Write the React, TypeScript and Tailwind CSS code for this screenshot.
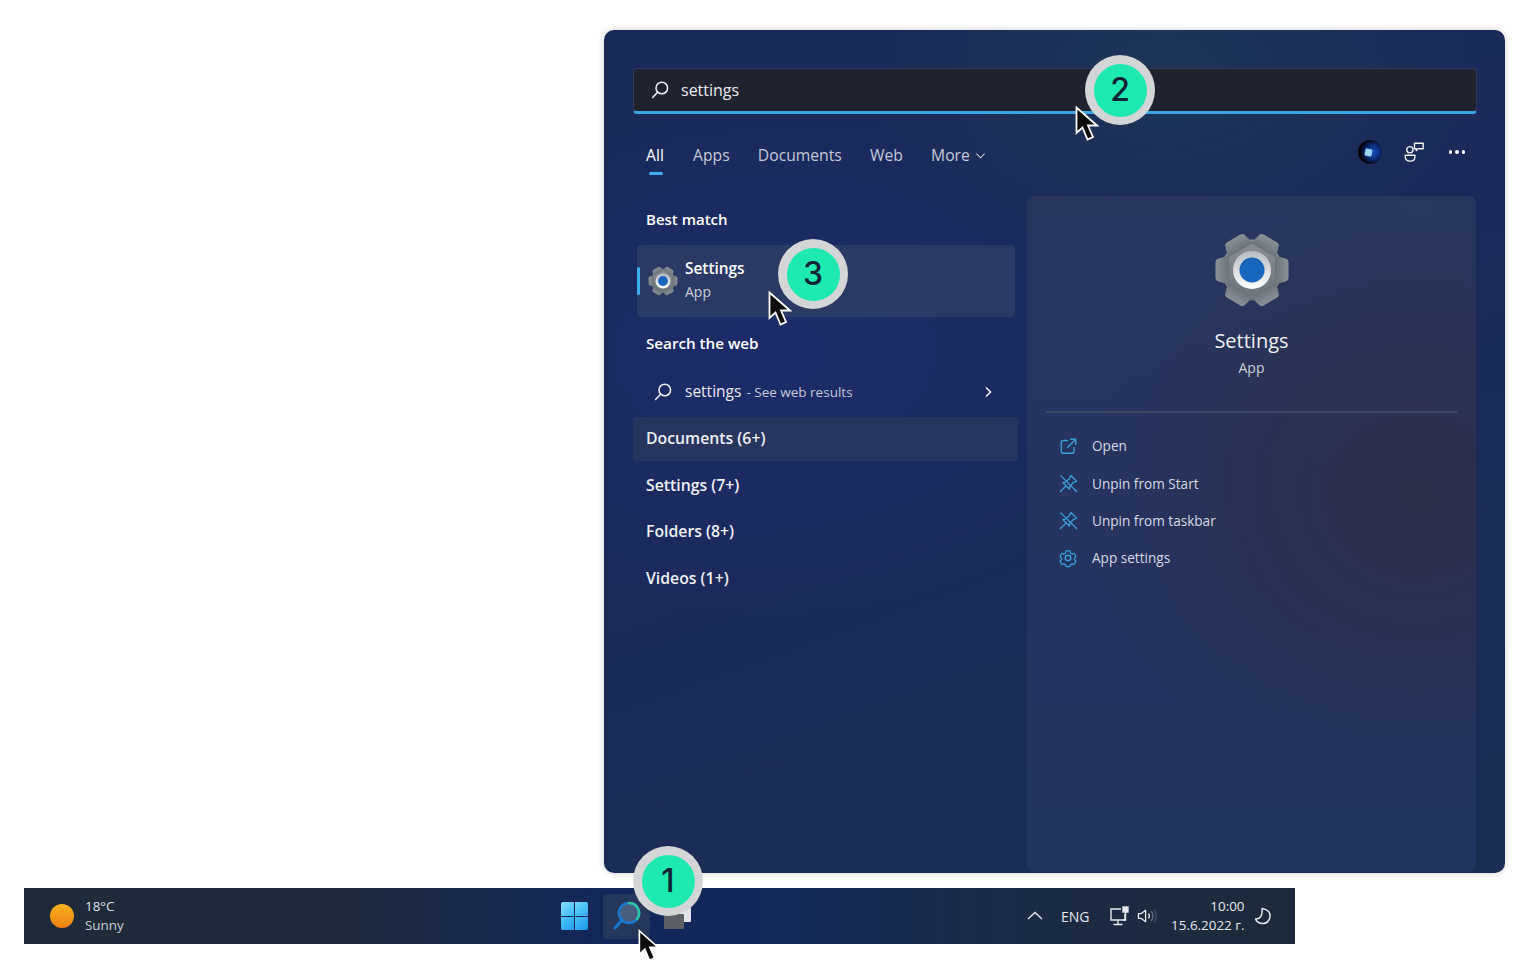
import React from "react";

const Gear = ({ className }: { className: string }) => (
  <svg viewBox="0 0 100 100" className={className}>
    <defs>
      <linearGradient id="gg" x1="0" y1="0" x2="0" y2="1">
        <stop offset="0" stopColor="#8b9198" />
        <stop offset="1" stopColor="#6c7279" />
      </linearGradient>
      <linearGradient id="gr" x1="0" y1="0" x2="0" y2="1">
        <stop offset="0" stopColor="#b9bcc2" />
        <stop offset="1" stopColor="#ffffff" />
      </linearGradient>
    </defs>
    <circle cx="50" cy="50" r="40" fill="url(#gg)" />
    {[0, 60, 120, 180, 240, 300].map((a) => (
      <path
        key={a}
        d="M31 20 L35 6 Q36 2 40 2 L60 2 Q64 2 65 6 L69 20 Z"
        fill="url(#gg)"
        transform={`rotate(${a + 30} 50 50)`}
      />
    ))}
    <circle cx="50" cy="50" r="25" fill="url(#gr)" />
    <circle cx="50" cy="50" r="16.5" fill="#1666bd" />
  </svg>
);

const Cursor = ({ className }: { className: string }) => (
  <svg viewBox="0 0 24 36" className={className}>
    <path d="M1.5 1.5 L1.5 27 L7.5 21.5 L12.5 33.5 L18 31 L13 19.5 L22 19.5 Z" fill="#0b0b0b" stroke="#ffffff" strokeWidth="1.8" />
  </svg>
);

const Badge = ({ n, className }: { n: string; className: string }) => (
  <div className={`absolute w-[70px] h-[70px] rounded-full bg-[#d3d5d6] flex items-center justify-center ${className}`}>
    <div className="w-[53px] h-[53px] rounded-full bg-[#1de9b0] flex items-center justify-center text-[32px] leading-none font-medium text-[#0d2436] font-['Inter',sans-serif]">
      {n}
    </div>
  </div>
);

const SearchGlyph = ({ className }: { className: string }) => (
  <svg viewBox="0 0 20 20" className={className} fill="none" stroke="#eef1f5" strokeWidth="1.5" strokeLinecap="round">
    <circle cx="11.8" cy="8" r="5.8" />
    <path d="M7.6 12.2 L2.6 17.4" />
  </svg>
);

const PinOff = () => (
  <svg viewBox="0 0 20 20" className="w-[19px] h-[19px]" fill="none" stroke="#3d9fd8" strokeWidth="1.4" strokeLinejoin="round" strokeLinecap="round">
    <path d="M12.5 1.5 L18.5 7.5 L15 9 L11.5 13 L11 16 L4 9 L7 8.5 L11 5 Z" />
    <path d="M7 13 L1.5 18.5" />
    <path d="M2 2 L18.5 18.5" />
  </svg>
);

const OpenIcon = () => (
  <svg viewBox="0 0 20 20" className="w-[17px] h-[17px]" fill="none" stroke="#3d9fd8" strokeWidth="1.6" strokeLinecap="round" strokeLinejoin="round">
    <path d="M9 3 H4 Q1.5 3 1.5 5.5 V15.5 Q1.5 18 4 18 H14 Q16.5 18 16.5 15.5 V11" />
    <path d="M12.5 1.5 H18.5 V7.5" />
    <path d="M18 2 L9 11" />
  </svg>
);

const CogIcon = () => (
  <svg viewBox="0 0 24 24" className="w-[20px] h-[20px]" fill="none" stroke="#3d9fd8" strokeWidth="1.7" strokeLinejoin="round">
    <path d="M9.5 2.5 h5 l.8 2.9 2.1 1.2 2.9-.8 2.4 4.2-2.1 2 v2.4 l2.1 2-2.4 4.2-2.9-.8-2.1 1.2-.8 2.4 h-5 l-.8-2.4-2.1-1.2-2.9.8-2.4-4.2 2.1-2 v-2.4 l-2.1-2 2.4-4.2 2.9.8 2.1-1.2 z" transform="translate(1.2 1.2) scale(.9)" />
    <circle cx="12" cy="12" r="3.3" />
  </svg>
);

const actions: [React.ReactNode, string][] = [
  [<OpenIcon />, "Open"],
  [<PinOff />, "Unpin from Start"],
  [<PinOff />, "Unpin from taskbar"],
  [<CogIcon />, "App settings"],
];

export default function App() {
  return (
    <div className="relative w-[1536px] h-[968px] overflow-hidden bg-white font-['Open_Sans','Noto_Sans',sans-serif] text-white">
      <div className="pt-[30px] pl-[604px]">
        <div className="w-[901px] h-[843px] rounded-[10px] pl-[29px] pr-[28px] pt-[38px] flex flex-col shadow-[0_0_6px_rgba(0,0,0,0.2)] bg-[radial-gradient(ellipse_300px_200px_at_560px_40px,#1e3557_0%,transparent_100%),radial-gradient(ellipse_380px_260px_at_170px_320px,#1c2c6a_0%,transparent_100%),linear-gradient(160deg,#192a58_0%,#1b2a5a_45%,#1b2e52_100%)]">
          <div className="h-[46px] shrink-0 flex items-center pl-[16px] gap-[11px] rounded-[4px] bg-[#1f2330] border border-[#2d3c5f] border-b-[3px] border-b-[#3ba6e6]">
            <SearchGlyph className="w-[20px] h-[20px]" />
            <span className="text-[16px] text-[#e8eaee]">settings</span>
          </div>

          <div className="h-[82px] shrink-0 flex items-start pt-[26px] pl-[13px] pr-[8px] justify-between">
            <div className="flex gap-[28.2px] text-[15.7px] leading-[30px] text-[#c4cad8]">
              <span className="relative text-white mr-[1px]">
                All
                <span className="absolute left-[3px] top-[32px] w-[14px] h-[3px] rounded-full bg-[#3fb0ef]" />
              </span>
              <span>Apps</span>
              <span>Documents</span>
              <span>Web</span>
              <span className="flex items-center gap-[5px]">
                More
                <svg viewBox="0 0 12 12" className="w-[11px] h-[11px]" fill="none" stroke="#c4cad8" strokeWidth="1.2">
                  <path d="M1.5 4 L6 8.5 L10.5 4" />
                </svg>
              </span>
            </div>
            <div className="flex items-center mt-[-1px] h-[26px]">
              <div className="w-[24px] h-[24px] rounded-full bg-[radial-gradient(circle_at_62%_50%,#1a55c4_0%,#0c2a78_38%,#020205_68%)] flex items-center justify-center">
                <div className="w-[7px] h-[7px] rotate-12 bg-[#9bd8f2] rounded-[1px] mr-[2px]" />
              </div>
              <svg viewBox="0 0 24 24" className="w-[22px] h-[22px] ml-[21px]" fill="none" stroke="#f0f2f5" strokeWidth="1.5" strokeLinejoin="round">
                <circle cx="7.5" cy="9.5" r="3.4" />
                <path d="M2.5 15.5 H13 V17.5 Q13 22 8 22 Q2.5 22 2.5 17.5 Z" />
                <path d="M12.5 2.5 H22 V8.5 H16.5 L14.5 10.5 V8.5 H12.5 Z" />
              </svg>
              <div className="flex gap-[3px] ml-[24px] mr-[4px]">
                <span className="w-[3.5px] h-[3.5px] rounded-full bg-white" />
                <span className="w-[3.5px] h-[3.5px] rounded-full bg-white" />
                <span className="w-[3.5px] h-[3.5px] rounded-full bg-white" />
              </div>
            </div>
          </div>

          <div className="flex-1 flex gap-[9px] min-h-0">
            <div className="w-[385px] shrink-0">
              <div className="h-[49px] flex items-center pl-[13px] pb-[3px] text-[15px] font-semibold">Best match</div>
              <div className="relative ml-[4px] mr-[3px] h-[72px] rounded-[4px] bg-[#2b3a64] flex items-center">
                <span className="absolute left-0 top-[22px] w-[3px] h-[28px] rounded-full bg-[#3fb0ef]" />
                <Gear className="w-[30px] h-[30px] ml-[11px]" />
                <div className="ml-[7px] flex flex-col mt-[-3px]">
                  <span className="text-[15.4px] leading-[24px] font-semibold">Settings</span>
                  <span className="text-[14px] leading-[22px] text-[#c9cfdb]">App</span>
                </div>
              </div>
              <div className="h-[52px] flex items-center pl-[13px] text-[15.2px] font-semibold">Search the web</div>
              <div className="h-[48px] flex items-center pl-[20px] pr-[24px] pb-[2px]">
                <SearchGlyph className="w-[20px] h-[20px]" />
                <span className="ml-[12px] text-[15.5px] text-[#e6e9ef]">settings</span>
                <span className="ml-[5px] text-[13.5px] text-[#c4cad8]">- See web results</span>
                <svg viewBox="0 0 12 12" className="w-[12px] h-[12px] ml-auto" fill="none" stroke="#e6e9ef" strokeWidth="1.7">
                  <path d="M4 1.5 L8.5 6 L4 10.5" />
                </svg>
              </div>
              <div className="h-[44px] rounded-[4px] bg-[#28365f] flex items-center pl-[13px] text-[15.8px] font-semibold text-[#eef0f4]">Documents (6+)</div>
              <div className="h-[47px] flex items-center pl-[13px] pt-[2px] text-[15.8px] font-semibold text-[#eef0f4]">Settings (7+)</div>
              <div className="h-[46px] flex items-center pl-[13px] pt-[2px] text-[15.8px] font-semibold text-[#eef0f4]">Folders (8+)</div>
              <div className="h-[47px] flex items-center pl-[13px] pt-[2px] text-[15.8px] font-semibold text-[#eef0f4]">Videos (1+)</div>
            </div>

            <div className="w-[449px] shrink-0 mb-[1px] rounded-[8px] flex flex-col bg-[radial-gradient(ellipse_330px_300px_at_390px_300px,#2e3049_0%,transparent_100%),linear-gradient(180deg,#29375f_0%,#25335f_40%,#243560_100%)]">
              <Gear className="w-[76px] h-[76px] mx-auto mt-[36px] shrink-0" />
              <div className="mt-[19px] text-center text-[20px] leading-[28px] text-[#eef0f4]">Settings</div>
              <div className="mt-[3px] text-center text-[14px] leading-[20px] text-[#c9cfdb]">App</div>
              <div className="mt-[33px] mx-[19px] h-[2px] bg-[#3c4768]" />
              <div className="mt-[15px] flex flex-col">
                {actions.map(([icon, label]) => (
                  <div key={label} className="h-[37.2px] flex items-center pl-[31px] text-[13.6px] text-[#d5dae4]">
                    <span className="w-[20px] h-[20px] flex items-center justify-center">{icon}</span>
                    <span className="ml-[14px]">{label}</span>
                  </div>
                ))}
              </div>
            </div>
          </div>
        </div>
      </div>

      <div className="ml-[24px] mt-[15px] w-[1271px] h-[56px] flex items-center relative bg-[linear-gradient(90deg,#1f2a39_0%,#1f2a3b_25%,#13275a_46%,#13285a_58%,#1b2b46_76%,#1d2a3b_100%)]">
        <div className="ml-[26px] w-[24px] h-[24px] rounded-full bg-[linear-gradient(180deg,#f8b320_0%,#ef7f12_100%)]" />
        <div className="ml-[11px] w-[50px] flex flex-col text-[13.4px] leading-[19px] text-[#dfe3ea]">
          <span>18°C</span>
          <span className="text-[#c8ced8]">Sunny</span>
        </div>
        <div className="ml-[426px] grid grid-cols-2 gap-[1px] w-[27px] h-[28px]">
          <span className="rounded-tl-[2px] bg-[linear-gradient(135deg,#8ae2fb,#36b6f5)]" />
          <span className="rounded-tr-[2px] bg-[linear-gradient(135deg,#6fd8fa,#2cacf3)]" />
          <span className="rounded-bl-[2px] bg-[linear-gradient(135deg,#55c8f8,#1e9df0)]" />
          <span className="rounded-br-[2px] bg-[linear-gradient(135deg,#48c0f7,#1a94ec)]" />
        </div>
        <div className="ml-[15px] w-[47px] h-[45px] rounded-[4px] bg-[#25375a] flex items-center justify-center">
          <svg viewBox="0 0 32 32" className="w-[32px] h-[32px] mt-[-1px]" fill="none" strokeLinecap="round">
            <circle cx="18" cy="13" r="10" fill="#4a5d7c" stroke="#1a78d0" strokeWidth="2.6" />
            <path d="M18 3 A10 10 0 0 1 26 19" stroke="#2fc9a0" strokeWidth="2.6" />
            <path d="M11 20 L4 28" stroke="#1a78d0" strokeWidth="3" />
          </svg>
        </div>
        <div className="relative ml-[14px] w-[27px] h-[28px] mt-[-2px]">
          <div className="absolute left-[7px] top-0 w-[20px] h-[21px] bg-[#e3e4e6] rounded-[1px]" />
          <div className="absolute left-0 top-[13px] w-[20px] h-[15px] bg-[#5c5f66] rounded-[1px]" />
        </div>

        <svg viewBox="0 0 16 16" className="w-[16px] h-[16px] ml-[336px]" fill="none" stroke="#e6e9ef" strokeWidth="1.3">
          <path d="M1 11 L8 4.5 L15 11" />
        </svg>
        <span className="ml-[18px] text-[14px] text-[#e6e9ef]">ENG</span>
        <svg viewBox="0 0 22 20" className="w-[22px] h-[20px] ml-[19px]" fill="none" stroke="#e6e9ef" strokeWidth="1.4">
          <path d="M12 3 H2 V14 H16 V8" />
          <path d="M9 14 V18 M4.5 18.5 H13.5" />
          <rect x="14" y="1" width="5" height="5" fill="#e6e9ef" />
          <path d="M16.5 6 V14 H14" />
        </svg>
        <svg viewBox="0 0 22 18" className="w-[21px] h-[18px] ml-[6px]" fill="none" stroke="#e6e9ef" strokeWidth="1.3" strokeLinejoin="round">
          <path d="M1.5 6.5 H4.5 L9 3 V15 L4.5 11.5 H1.5 Z" />
          <path d="M12 6.5 Q14 9 12 11.5" />
          <path d="M15 4 Q18.5 9 15 14" stroke="#6d7688" />
          <path d="M18 2 Q22.5 9 18 16" stroke="#434d62" />
        </svg>
        <div className="ml-[17px] w-[70px] flex flex-col items-end text-[13.4px] leading-[19px] text-[#e6e9ef] whitespace-nowrap">
          <span>10:00</span>
          <span>15.6.2022 г.</span>
        </div>
        <svg viewBox="0 0 18 18" className="w-[18px] h-[18px] ml-[9px]" fill="none" stroke="#e6e9ef" strokeWidth="1.4" strokeLinejoin="round">
          <path d="M8 1.5 Q17 3 16 10 Q14.5 17 8 16.5 Q3 16 1.5 12 Q9 12 8 1.5 Z" />
        </svg>
      </div>

      <Badge n="2" className="left-[1085px] top-[55px]" />
      <Cursor className="absolute left-[1075px] top-[106px] w-[24px] h-[36px]" />
      <Badge n="3" className="left-[778px] top-[239px]" />
      <Cursor className="absolute left-[768px] top-[291px] w-[24px] h-[36px]" />
      <Badge n="1" className="left-[633px] top-[846px]" />
      <Cursor className="absolute left-[638px] top-[929px] w-[22px] h-[34px]" />
    </div>
  );
}
